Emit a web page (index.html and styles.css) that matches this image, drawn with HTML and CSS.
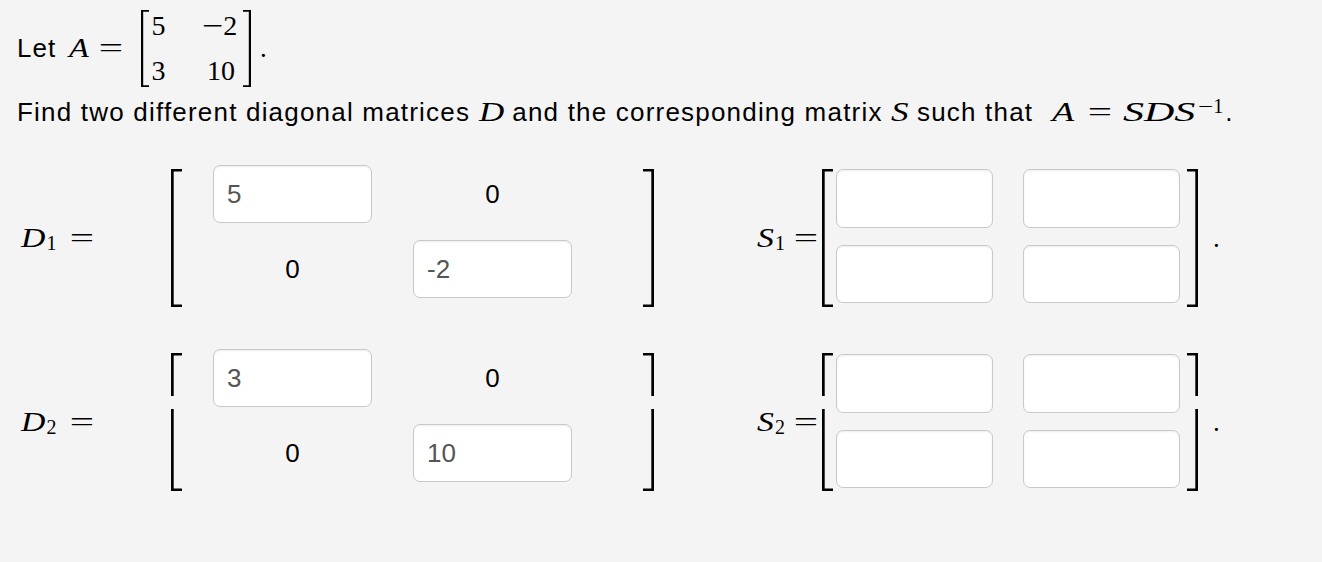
FILE: index.html
```html
<!DOCTYPE html>
<html>
<head>
<meta charset="utf-8">
<link rel="stylesheet" href="styles.css">
</head>
<body>
<div class="page">
  <div class="l1">
    <span class="txt">Let</span>
    <span class="mi w a1">A</span>
    <span class="eq e1">=</span>
    <span class="amat">
      <svg class="abr" width="8" height="77" viewBox="0 0 8 77"><path d="M0 0H8V1.8H2.2V75.2H8V77H0Z"/></svg>
      <span class="agrid">
        <span>5</span><span><span class="neg">&#8722;</span>2</span>
        <span>3</span><span>10</span>
      </span>
      <svg class="abr" width="8" height="77" viewBox="0 0 8 77"><path d="M0 0H8V77H0V75.2H5.8V1.8H0Z"/></svg>
    </span>
    <span class="mn p1">.</span>
  </div>

  <p class="l2">Find two different diagonal matrices <span class="mi w wd">D</span> and the corresponding matrix <span class="mi w ws">S</span> such that <span class="mi w ma">A</span><span class="eq e2">=</span><span class="mi w sds">SDS</span><span class="sup"><span class="neg">&#8722;</span>1</span><span class="fin">.</span></p>

  <div class="mrow r1">
    <div class="lab dlab"><span class="lbl"><span class="mi w ld">D</span><span class="sub">1</span><span class="eq e3">=</span></span></div>
    <svg class="br" width="11" height="138" viewBox="0 0 11 138"><path d="M0 0H11V2.5H2.7V135.5H11V138H0Z"/></svg>
    <div class="dgrid">
      <input class="ans" type="text" value="5" readonly>
      <div class="zero">0</div>
      <div class="zero">0</div>
      <input class="ans" type="text" value="-2" readonly>
    </div>
    <svg class="br" width="11" height="138" viewBox="0 0 11 138"><path d="M0 0H11V138H0V135.5H8.3V2.5H0Z"/></svg>
    <div class="lab slab"><span class="lbl"><span class="mi w ls">S</span><span class="sub ss">1</span><span class="eq e4">=</span></span></div>
    <svg class="br" width="11" height="138" viewBox="0 0 11 138"><path d="M0 0H11V2.5H2.7V135.5H11V138H0Z"/></svg>
    <div class="sgrid">
      <input class="ans" type="text" value="" readonly>
      <input class="ans" type="text" value="" readonly>
      <input class="ans" type="text" value="" readonly>
      <input class="ans" type="text" value="" readonly>
    </div>
    <svg class="br" width="11" height="138" viewBox="0 0 11 138"><path d="M0 0H11V138H0V135.5H8.3V2.5H0Z"/></svg>
    <div class="lab dot"><span class="lbl">.</span></div>
  </div>

  <div class="mrow r2">
    <div class="lab dlab"><span class="lbl"><span class="mi w ld">D</span><span class="sub">2</span><span class="eq e3">=</span></span></div>
    <svg class="br" width="11" height="138" viewBox="0 0 11 138"><path d="M0 0H11V2.5H2.7V43H0Z M0 56H2.7V135.5H11V138H0Z"/></svg>
    <div class="dgrid">
      <input class="ans" type="text" value="3" readonly>
      <div class="zero">0</div>
      <div class="zero">0</div>
      <input class="ans" type="text" value="10" readonly>
    </div>
    <svg class="br" width="11" height="138" viewBox="0 0 11 138"><path d="M0 0H11V43H8.3V2.5H0Z M8.3 56H11V138H0V135.5H8.3Z"/></svg>
    <div class="lab slab"><span class="lbl"><span class="mi w ls">S</span><span class="sub ss">2</span><span class="eq e4">=</span></span></div>
    <svg class="br" width="11" height="138" viewBox="0 0 11 138"><path d="M0 0H11V2.5H2.7V43H0Z M0 56H2.7V135.5H11V138H0Z"/></svg>
    <div class="sgrid">
      <input class="ans" type="text" value="" readonly>
      <input class="ans" type="text" value="" readonly>
      <input class="ans" type="text" value="" readonly>
      <input class="ans" type="text" value="" readonly>
    </div>
    <svg class="br" width="11" height="138" viewBox="0 0 11 138"><path d="M0 0H11V43H8.3V2.5H0Z M8.3 56H11V138H0V135.5H8.3Z"/></svg>
    <div class="lab dot"><span class="lbl">.</span></div>
  </div>
</div>
</body>
</html>
```

FILE: styles.css
```css
* { box-sizing: border-box; }
html, body { margin: 0; padding: 0; }
body {
  background: #f4f4f4;
  width: 1322px;
  height: 562px;
  overflow: hidden;
  font-family: "Liberation Sans", Arial, Helvetica, sans-serif;
  color: #000;
}
.page { padding: 3px 0 0 17px; }

.l1 { display: flex; align-items: center; height: 90px; }
.txt { font-size: 26px; line-height: 26px; letter-spacing: 1.1px; }
.mi {
  font-family: "Liberation Serif", "Times New Roman", serif;
  font-style: italic;
  font-size: 27px;
  line-height: 27px;
  letter-spacing: 0;
}
/* math italic letters drawn a little wider, like the TeX font */
.w {
  display: inline-block;
  transform: scaleX(1.25);
  transform-origin: 0 50%;
}
.mn {
  font-family: "Liberation Serif", "Times New Roman", serif;
  font-size: 27px;
  line-height: 27px;
}
.eq {
  display: inline-block;
  width: 24px;
  text-align: center;
  font-family: "Liberation Serif", "Times New Roman", serif;
  font-style: normal;
  font-size: 27px;
  line-height: 27px;
  letter-spacing: 0;
  transform: scaleX(1.6);
}
.neg { display: inline-block; transform: scaleX(1.35); margin-right: 3px; }
.a1 { margin-left: 13px; margin-right: 4px; transform: scaleX(1.2); }
.e1 { margin-left: 9px; }
.amat { display: flex; align-items: center; margin-left: 18px; }
.abr { display: block; fill: #000; }
.agrid {
  display: grid;
  grid-template-columns: 15px 40px;
  grid-auto-rows: 45px;
  column-gap: 35px;
  margin: 0 2px;
  font-family: "Liberation Serif", "Times New Roman", serif;
  font-size: 28px;
  line-height: 45px;
  text-align: center;
}
.p1 { margin-left: 9px; }

.l2 {
  margin: 4px 0 0;
  font-size: 26px;
  line-height: 30px;
  letter-spacing: 1.2px;
  white-space: nowrap;
}
.l2 .mi { font-size: 28px; }
.wd { margin-right: 5px; }
.ws { margin-right: 3.5px; }
.l2 .ma { margin-left: 10px; margin-right: 5px; transform: scaleX(1.3); }
.l2 .sds { margin-left: 11px; margin-right: 24px; transform: scaleX(1.5); }
.e2 { margin-left: 14px; }
.sup {
  font-family: "Liberation Serif", "Times New Roman", serif;
  font-size: 20px;
  line-height: 0;
  letter-spacing: 0;
  vertical-align: 8px;
  margin-left: 5px;
}
.sup .neg { margin-right: 2px; }
.fin { margin-left: 2px; }

.mrow { display: flex; align-items: flex-start; }
.r1 { margin-top: 38px; }
.r2 { margin-top: 42px; }
.lab { display: flex; align-items: center; height: 138px; margin-top: 4px; flex: none; }
.lbl {
  font-family: "Liberation Serif", "Times New Roman", serif;
  font-size: 27px;
  line-height: 27px;
  white-space: nowrap;
}
.ld { margin-right: 5px; }
.ls { margin-right: 3.5px; }
.dlab { width: 154px; padding-left: 4px; }
.slab { width: 168px; justify-content: flex-end; padding-right: 4px; }
.sub {
  font-family: "Liberation Serif", "Times New Roman", serif;
  font-size: 20px;
  line-height: 0;
  vertical-align: -3px;
  margin-left: 1px;
}
.e3 { margin-left: 13px; }
.e4 { margin-left: 9px; }
.br { display: block; margin-top: 4px; flex: none; fill: #000; }
.dgrid {
  display: grid;
  grid-template-columns: 159px 159px;
  grid-template-rows: 58px 58px;
  column-gap: 41px;
  row-gap: 17px;
  margin: 0 71px 0 31px;
}
.sgrid {
  display: grid;
  grid-template-columns: 157px 157px;
  grid-template-rows: 59px 58px;
  column-gap: 30px;
  row-gap: 17px;
  margin: 4px 7px 0 3px;
}
.r2 .sgrid { margin-top: 5px; }
.zero {
  display: flex;
  align-items: center;
  justify-content: center;
  font-size: 26px;
}
.ans {
  display: block;
  width: 100%;
  height: 100%;
  margin: 0;
  padding: 0 0 0 13px;
  border: 1px solid #c9c9c9;
  border-radius: 7px;
  background: #fff;
  box-shadow: inset 0 1px 2px rgba(0, 0, 0, 0.07);
  font-family: "Liberation Sans", Arial, Helvetica, sans-serif;
  font-size: 26px;
  color: #555;
  outline: none;
}
.dot { margin-left: 15px; }
```
